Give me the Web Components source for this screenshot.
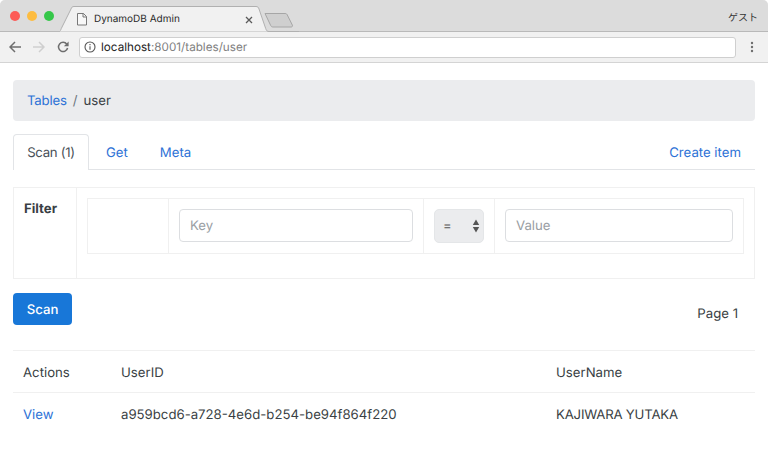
<!DOCTYPE html>
<html>
<head>
<meta charset="utf-8">
<title>DynamoDB Admin</title>
<style>
html, body { margin: 0; padding: 0; background: #fff; overflow: hidden; }
body { width: 768px; height: 457px; font: 13.2px Inter, "Noto Sans CJK JP", sans-serif; color: #3a3f44; text-rendering: geometricPrecision; }
</style>
</head>
<body>
<browser-chrome></browser-chrome>
<page-content>
  <crumb-bar></crumb-bar>
  <tab-nav></tab-nav>
  <filter-panel></filter-panel>
  <scan-row></scan-row>
  <result-table></result-table>
</page-content>

<script>
function define(name, html) {
  customElements.define(name, class extends HTMLElement {
    connectedCallback() {
      this.attachShadow({ mode: "open" }).innerHTML = html;
    }
  });
}

define("browser-chrome", `
<style>
:host { display: block; height: 63px; background: #f1f1f1; border-bottom: 1px solid #d4d4d4; box-sizing: border-box; border-radius: 5px 5px 0 0; }
.top { height: 32px; box-sizing: border-box; background: #dcdcdc; border-bottom: 1px solid #b9b9b9; display: flex; position: relative; border-radius: 5px 5px 0 0; }
.lights { display: flex; gap: 7px; padding: 11px 0 0 10px; }
.lights i { width: 10px; height: 10px; border-radius: 50%; }
.tabshape { position: absolute; left: 60px; top: 6px; }
.title { position: absolute; left: 94px; top: 13px; font: 10px/13px Inter, sans-serif; color: #2a2a2a; }
.guest { margin-left: auto; padding: 9px 10px 0 0; font: 10px "Noto Sans CJK JP", sans-serif; color: #333; }
.bar { height: 30px; display: flex; align-items: center; padding-left: 9px; }
.nav { display: flex; gap: 12px; width: 70px; flex: none; }
.url { width: 657px; height: 21px; box-sizing: border-box; background: #fff; border: 1px solid #cfcfcf; border-radius: 3px; display: flex; align-items: center; padding-left: 4px; gap: 5px; font: 11.7px Inter, sans-serif; color: #222; }
.url span { color: #808080; }
.more { margin-left: 14px; }
</style>
<div class="top">
  <div class="lights"><i style="background:#fc5b57"></i><i style="background:#fdbc40"></i><i style="background:#35c749"></i></div>
  <svg class="tabshape" width="240" height="26" viewBox="0 0 240 26">
    <path d="M-5 25.500h3c2 0 2.600-1 3.300-3L11 3c.5-1.600 1.300-2.500 3-2.500h182c1.800 0 2.500.9 3 2.500l6.700 19.500c.7 2 1.300 3 3.300 3h30" fill="#f1f1f1" stroke="#b0b0b0"/>
    <path d="M205 7.500h20c1.300 0 1.800.4 2.300 1.500l5 10c.5 1.200 0 2-1.300 2h-18c-1.200 0-1.800-.5-2.300-1.500L205 7.500z" fill="#cfcfcf" stroke="#a6a6a6"/>
    <path d="M186 11l6 6M192 11l-6 6" stroke="#5a5a5a" stroke-width="1.300" fill="none"/>
    <path d="M17.500 7.500h6l3 3v8.500h-9zM23 7.500v3.500h3.500" fill="#f8f8f8" stroke="#6b6b6b" stroke-width=".9"/>
  </svg>
  <div class="title">DynamoDB Admin</div>
  <div class="guest">ゲスト</div>
</div>
<div class="bar">
  <div class="nav">
    <svg width="12" height="12" viewBox="0 0 12 12" fill="none" stroke="#6e6e6e" stroke-width="1.500"><path d="M12 6H1.500M6 1L1 6l5 5"/></svg>
    <svg width="12" height="12" viewBox="0 0 12 12" fill="none" stroke="#cfcfcf" stroke-width="1.500"><path d="M0 6h10.500M6 1l5 5-5 5"/></svg>
    <svg width="12" height="12" viewBox="0 0 12 12" fill="none" stroke="#6e6e6e" stroke-width="1.500"><path d="M9.800 3.200A4.600 4.600 0 1 0 10.600 7"/><path d="M11.600 .6v4.700H6.900z" fill="#6e6e6e" stroke="none"/></svg>
  </div>
  <div class="url">
    <svg width="12" height="12" viewBox="0 0 12 12" fill="none" stroke="#555" stroke-width="1.100"><circle cx="6" cy="6" r="5"/><path d="M6 5.200v3.600M6 3v1.300"/></svg>
    <div>localhost<span>:8001/tables/user</span></div>
  </div>
  <svg class="more" width="4" height="12" viewBox="0 0 4 12" fill="#6e6e6e"><circle cx="2" cy="2" r="1.200"/><circle cx="2" cy="6" r="1.200"/><circle cx="2" cy="10" r="1.200"/></svg>
</div>`);

define("page-content", `
<style>
:host { display: block; padding: 17px 13px 0; }
</style>
<slot></slot>`);

define("crumb-bar", `
<style>
:host { display: flex; align-items: center; height: 41px; padding-left: 14px; background: #ebecee; border-radius: 4px; margin-bottom: 13px; }
a { color: #2d72d6; letter-spacing: -.2px; }
span { color: #6c757d; margin: 0 6px; }
</style>
<a>Tables</a><span>/</span>user`);

define("tab-nav", `
<style>
:host { display: flex; height: 36px; box-sizing: border-box; border-bottom: 1px solid #e2e4e7; margin-bottom: 17px; }
div { height: 36px; box-sizing: border-box; padding: 0 14px; line-height: 38px; margin-right: 4px; color: #2d72d6; }
.on { color: #495057; width: 76px; padding: 0; text-align: center; margin-right: 3px; background: #fff; border: 1px solid #e2e4e7; border-bottom: 0; border-radius: 4px 4px 0 0; line-height: 37px; letter-spacing: -.3px; }
.end { margin: 0 0 0 auto; }
</style>
<div class="on">Scan (1)</div><div>Get</div><div>Meta</div><div class="end">Create item</div>`);

define("filter-panel", `
<style>
:host { display: flex; height: 92px; box-sizing: border-box; border: 1px solid #f0f0f0; margin-bottom: 14px; }
.label { width: 63px; flex: none; box-sizing: border-box; border-right: 1px solid #f0f0f0; padding: 13px 0 0 10px; font-weight: 700; }
.body { flex: 1; padding: 10px; }
.row { display: flex; height: 56px; box-sizing: border-box; border: 1px solid #f0f0f0; }
.cell { box-sizing: border-box; border-left: 1px solid #f0f0f0; padding: 10px 10px 0 10px; }
.cell:first-child { border-left: 0; }
.field { height: 33px; box-sizing: border-box; border: 1px solid #dcdee1; border-radius: 4px; padding-left: 10px; line-height: 33px; color: #9a9ea3; }
.select { height: 34px; background: #ebecee; border-radius: 5px; display: flex; align-items: center; justify-content: space-between; padding: 0 3px 0 8px; color: #555; font-size: 13px; border: 1px solid #e4e6e8; box-sizing: border-box; }
</style>
<div class="label">Filter</div>
<div class="body">
  <div class="row">
    <div class="cell" style="width:80px"></div>
    <div class="cell" style="width:255px"><div class="field">Key</div></div>
    <div class="cell" style="width:71px"><div class="select"><span>=</span>
      <svg width="8" height="14" viewBox="0 0 8 14" fill="#555"><path d="M4 .5l3.200 5.500H.8zM4 13.500L.8 8h6.400z"/></svg></div></div>
    <div class="cell" style="flex:1"><div class="field">Value</div></div>
  </div>
</div>`);

define("scan-row", `
<style>
:host { display: flex; height: 58px; box-sizing: border-box; border-bottom: 1px solid #f0f0f0; }
button { width: 59px; height: 32px; padding: 1px 0 0; border: 0; border-radius: 4px; background: #1877d8; color: #fff; font: 500 13.2px Inter, sans-serif; text-rendering: geometricPrecision; }
div { margin-left: auto; padding: 13px 17px 0 0; }
</style>
<button>Scan</button><div>Page 1</div>`);

define("result-table", `
<style>
:host { display: block; }
.row { display: grid; grid-template-columns: 98px 435px 1fr; height: 41px; box-sizing: border-box; align-items: center; padding: 2px 0 0 10px; }
.row + .row { border-top: 1px solid #f0f0f0; height: 42px; }
a { color: #2d72d6; }
.name { letter-spacing: -.2px; }
</style>
<div class="row"><div>Actions</div><div>UserID</div><div>UserName</div></div>
<div class="row"><a>View</a><div>a959bcd6-a728-4e6d-b254-be94f864f220</div><div class="name">KAJIWARA YUTAKA</div></div>`);
</script>
</body>
</html>
